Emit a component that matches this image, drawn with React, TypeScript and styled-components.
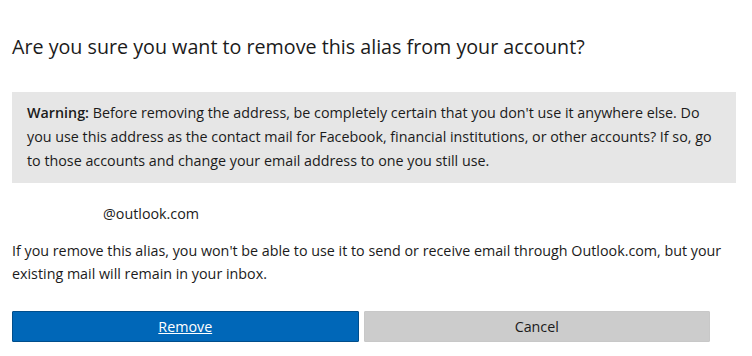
import React from "react";
import styled, { createGlobalStyle } from "styled-components";

const GlobalStyle = createGlobalStyle`
  html, body {
    margin: 0;
    padding: 0;
    background: #ffffff;
  }
  body {
    font-family: "Segoe UI", "Open Sans", "Noto Sans", sans-serif;
    color: #1b1b1b;
  }
`;

const Wrapper = styled.div`
  width: 724px;
  padding: 33px 16px 0 12px;
`;

const Title = styled.h1`
  margin: 0;
  font-size: 19.7px;
  font-weight: 400;
  line-height: 28px;
  color: #1b1b1b;
`;

const WarningBox = styled.div`
  margin-top: 31px;
  background: #e6e6e6;
  padding: 9px 15px 10px 15px;
  font-size: 14.3px;
  line-height: 24px;
  color: #1b1b1b;
`;

const Strong = styled.strong`
  font-weight: 600;
`;

const Email = styled.div`
  margin-top: 19px;
  font-size: 14.3px;
  line-height: 24px;
  display: flex;
  align-items: center;
`;

const Redacted = styled.span`
  display: inline-block;
  width: 91px;
  height: 14px;
`;

const Paragraph = styled.p`
  margin: 13px 0 0 0;
  font-size: 14.3px;
  line-height: 23px;
`;

const Buttons = styled.div`
  margin-top: 26px;
  width: 698px;
  display: flex;
  gap: 5px;
`;

const Button = styled.button<{ $primary?: boolean }>`
  flex: 1;
  height: 31px;
  font-family: inherit;
  font-size: 14.3px;
  cursor: pointer;
  border-radius: 1px;
  border: 1px solid ${({ $primary }) => ($primary ? "#004e8c" : "#c8c8c8")};
  background: ${({ $primary }) => ($primary ? "#0067b8" : "#cccccc")};
  color: ${({ $primary }) => ($primary ? "#ffffff" : "#1b1b1b")};
  text-decoration: ${({ $primary }) => ($primary ? "underline" : "none")};
`;

export default function App() {
  return (
    <>
      <GlobalStyle />
      <Wrapper>
        <Title>Are you sure you want to remove this alias from your account?</Title>
        <WarningBox>
          <Strong>Warning:</Strong> Before removing the address, be completely certain that you don't use it anywhere else. Do you use this address as the contact mail for Facebook, financial institutions, or other accounts? If so, go to those accounts and change your email address to one you still use.
        </WarningBox>
        <Email>
          <Redacted />
          @outlook.com
        </Email>
        <Paragraph>
          If you remove this alias, you won't be able to use it to send or receive email through Outlook.com, but your existing mail will remain in your inbox.
        </Paragraph>
        <Buttons>
          <Button $primary>Remove</Button>
          <Button>Cancel</Button>
        </Buttons>
      </Wrapper>
    </>
  );
}
